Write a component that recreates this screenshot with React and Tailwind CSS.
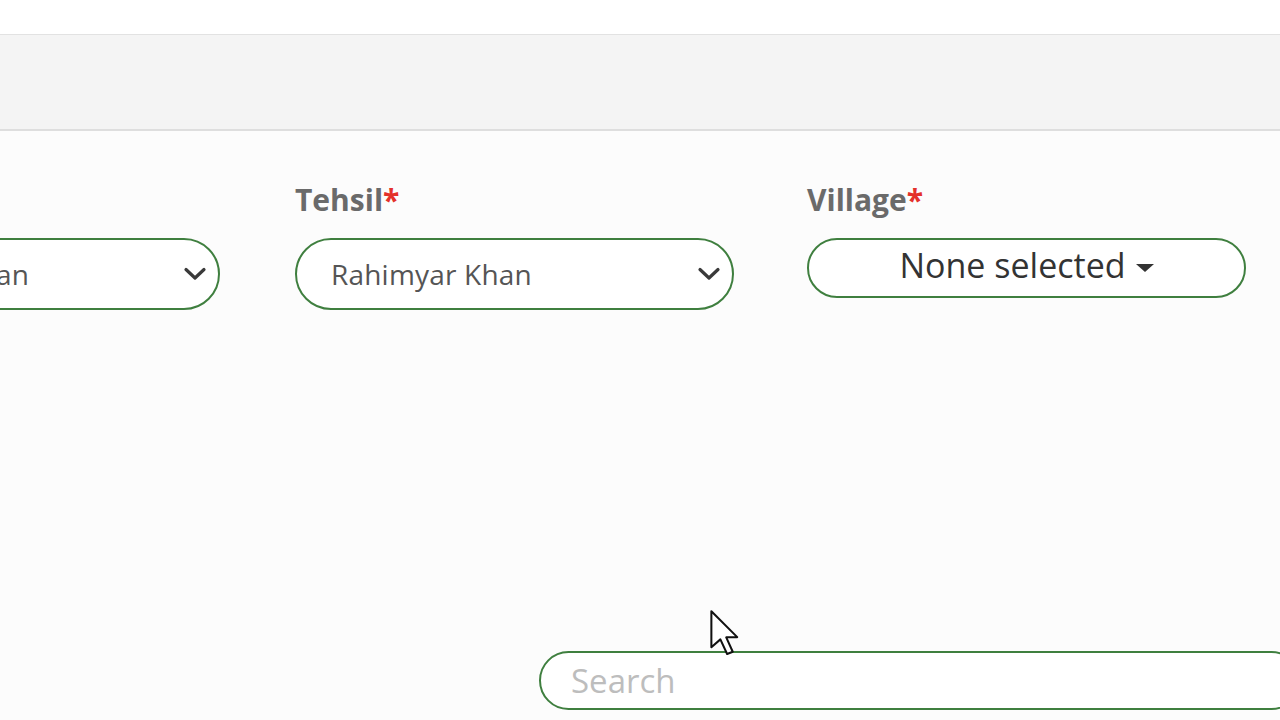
import React from 'react';

const font = { fontFamily: '"Open Sans", "Noto Sans", sans-serif' };

const Chevron = () => (
  <svg width="24" height="16" viewBox="0 0 24 16" fill="none">
    <path d="M3 3.5 L12 12 L21 3.5" stroke="#3a3a3a" strokeWidth="3.2" strokeLinecap="round" strokeLinejoin="round" />
  </svg>
);

const Field = ({ label, children, className = '' }) => (
  <div className={`flex flex-col w-[439px] shrink-0 ${className}`}>
    <div className="h-[36px] text-[30px] leading-[36px] font-bold text-[#6a6a6a]">
      {label}
      <span className="text-[#e4312b]">*</span>
    </div>
    <div className="mt-[20px]">{children}</div>
  </div>
);

const SelectBox = ({ value }) => (
  <div className="h-[72px] rounded-full border-2 border-[#3f7f3f] bg-white flex items-center justify-between pl-[34px] pr-[11px]">
    <span className="text-[28px] tracking-[0.2px] text-[#555] whitespace-nowrap">{value}</span>
    <Chevron />
  </div>
);

const Cursor = () => (
  <svg width="34" height="54" viewBox="0 0 15 24" className="absolute left-[709px] top-[609px]">
    <path
      d="M1 1 L1 17 L5 13.5 L8 20 L10.5 19 L7.6 12.6 L12.5 12.5 Z"
      fill="#fff"
      stroke="#111"
      strokeWidth="0.9"
      strokeLinejoin="round"
    />
  </svg>
);

export default function App() {
  return (
    <div className="relative w-[1280px] h-[720px] overflow-hidden bg-[#fcfcfc]" style={font}>
      <div className="h-[35px] bg-white border-b border-[#e2e2e2]" />
      <div className="h-[96px] bg-[#f4f4f4] border-b-2 border-[#dedede]" />

      <div className="flex ml-[-217px] pt-[51px]">
        <div className="flex flex-col w-[437px] shrink-0">
          <div className="h-[36px]" />
          <div className="mt-[20px]">
            <SelectBox value="Rahim Yar Khan" />
          </div>
        </div>
        <Field label="Tehsil" className="ml-[75px]">
          <SelectBox value="Rahimyar Khan" />
        </Field>
        <Field label="Village" className="ml-[73px]">
          <div className="h-[60px] rounded-full border-2 border-[#3f7f3f] bg-white flex items-center justify-center gap-[10px]">
            <span className="text-[34px] text-[#333] leading-none pb-[6px]">None selected</span>
            <svg width="18" height="10" viewBox="0 0 18 10">
              <path d="M0 1 L18 1 L9 9 Z" fill="#333" />
            </svg>
          </div>
        </Field>
      </div>

      <div className="flex justify-end mt-[341px]">
        <div className="w-[762px] mr-[-21px] h-[59px] rounded-full border-2 border-[#3f7f3f] bg-white flex items-center pl-[30px]">
          <input
            placeholder="Search"
            className="w-full bg-transparent outline-none text-[33px] text-[#333] placeholder:text-[#bdbdbd]"
            style={font}
          />
        </div>
      </div>

      <Cursor />
    </div>
  );
}
